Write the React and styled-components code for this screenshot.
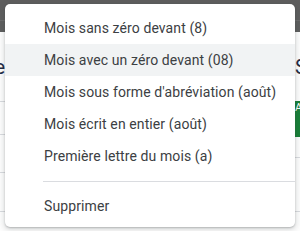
import React from "react";
import styled, { createGlobalStyle } from "styled-components";

const GlobalStyle = createGlobalStyle`
  html, body {
    margin: 0;
    padding: 0;
    background: #ffffff;
    font-family: Roboto, "Liberation Sans", Arial, sans-serif;
  }
`;

const Page = styled.div`
  position: relative;
  width: 300px;
  height: 231px;
  overflow: hidden;
  display: flex;
  flex-direction: column;
  background: #ffffff;
`;

const TopBar = styled.div`
  height: 32px;
  flex: none;
  background: #5e5e5e;
  display: flex;
  flex-direction: column;
`;

const BarLine = styled.div`
  margin-top: 20px;
  height: 1px;
  background: #6c6c6c;
`;

const Body = styled.div`
  flex: 1;
  display: flex;
  justify-content: space-between;
`;

const Side = styled.div`
  width: 5px;
  display: flex;
  flex-direction: column;
  align-items: ${({ $right }) => ($right ? "flex-start" : "flex-end")};
`;

const Cell = styled.div`
  width: 5px;
  height: ${({ $h }) => $h}px;
  flex: none;
  overflow: hidden;
  display: flex;
  align-items: center;
  justify-content: ${({ $right }) => ($right ? "flex-start" : "flex-end")};
  border-bottom: ${({ $line }) => ($line ? "1px solid #dadce0" : "none")};
  box-sizing: border-box;
`;

const BigText = styled.span`
  font-size: 20px;
  color: #1f2a44;
  white-space: nowrap;
  line-height: 1;
`;

const GreenButton = styled.div`
  width: 5px;
  height: ${({ $h }) => $h}px;
  flex: none;
  background: #188038;
  color: #fff;
  font-size: 11px;
  line-height: 14px;
  overflow: hidden;
`;

const Menu = styled.div`
  position: absolute;
  left: 5px;
  top: 4px;
  width: 290px;
  box-sizing: border-box;
  padding: 8px 0 5px;
  background: #ffffff;
  border-radius: 5px;
  box-shadow: 0 2px 6px 2px rgba(60, 64, 67, 0.15),
    0 1px 2px 0 rgba(60, 64, 67, 0.3);
`;

const Item = styled.div`
  height: 32px;
  display: flex;
  align-items: center;
  padding-left: 39px;
  font-size: 14px;
  letter-spacing: 0.1px;
  color: #3c4043;
  background: ${({ $active }) => ($active ? "#f1f3f4" : "transparent")};
  white-space: nowrap;
`;

const Separator = styled.div`
  height: 1px;
  margin: 9px 0 8px 38px;
  background: #dadce0;
`;

const items = [
  "Mois sans zéro devant (8)",
  "Mois avec un zéro devant (08)",
  "Mois sous forme d'abréviation (août)",
  "Mois écrit en entier (août)",
  "Première lettre du mois (a)",
];

export default function App() {
  return (
    <>
      <GlobalStyle />
      <Page>
        <TopBar>
          <BarLine />
        </TopBar>
        <Body>
          <Side>
            <Cell $h={24} />
            <Cell $h={22}>
              <BigText>Date</BigText>
            </Cell>
            <Cell $h={24} $line />
            <Cell $h={33} $line />
            <Cell $h={38} $line />
            <Cell $h={39} $line />
          </Side>
          <Side $right>
            <Cell $h={24} />
            <Cell $h={22} $right>
              <BigText>Sem</BigText>
            </Cell>
            <Cell $h={23} />
            <GreenButton $h={36}>A</GreenButton>
            <Cell $h={21} $line />
            <Cell $h={54} $line />
          </Side>
        </Body>
        <Menu>
          {items.map((label, i) => (
            <Item key={label} $active={i === 1}>
              {label}
            </Item>
          ))}
          <Separator />
          <Item>Supprimer</Item>
        </Menu>
      </Page>
    </>
  );
}
